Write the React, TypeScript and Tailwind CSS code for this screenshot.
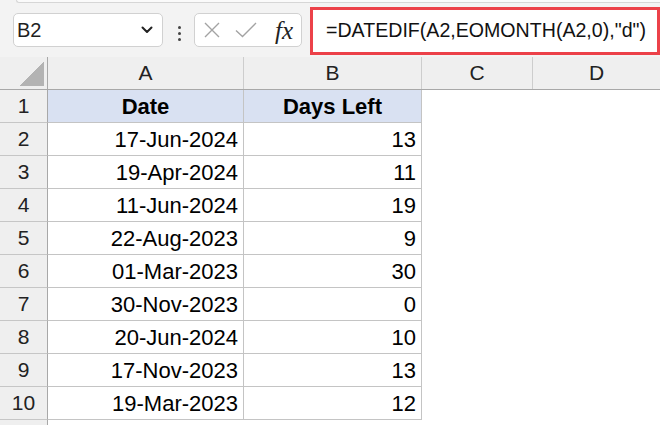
import React from 'react';

const ROWS = [
  { date: '17-Jun-2024', left: 13 },
  { date: '19-Apr-2024', left: 11 },
  { date: '11-Jun-2024', left: 19 },
  { date: '22-Aug-2023', left: 9 },
  { date: '01-Mar-2023', left: 30 },
  { date: '30-Nov-2023', left: 0 },
  { date: '20-Jun-2024', left: 10 },
  { date: '17-Nov-2023', left: 13 },
  { date: '19-Mar-2023', left: 12 },
];

const COLS = 'grid grid-cols-[48px_196px_178px_111px_1fr]';
const SANS = "font-['Liberation_Sans',Arial,sans-serif]";

function Toolbar() {
  return (
    <div className="h-[57px] bg-[#f3f3f3]">
      <div className="ml-[16px] h-[3px] rounded-bl-[4px] border-b border-l border-[#d6d6d6] bg-[#fafafa]" />
      <div className="flex items-start">
        <div className="ml-[13px] mt-[10px] flex h-[34px] w-[150px] items-center justify-between rounded-[5px] border border-[#d1d1d1] bg-white pl-[3px] pr-[9px]">
          <span className="text-[20px] text-[#1f1f1f]">B2</span>
          <svg width="12" height="8" viewBox="0 0 12 8" fill="none">
            <path d="M1.5 1.5 6 6l4.5-4.5" stroke="#222" strokeWidth="2" strokeLinecap="round" strokeLinejoin="round" />
          </svg>
        </div>
        <div className="ml-[14px] mt-[23px] flex w-[4px] flex-col items-center gap-[3px]">
          <span className="h-[3px] w-[3px] rounded-full bg-[#444]" />
          <span className="h-[3px] w-[3px] rounded-full bg-[#444]" />
          <span className="h-[3px] w-[3px] rounded-full bg-[#444]" />
        </div>
        <div className="ml-[13px] mt-[10px] flex h-[34px] w-[108px] items-center rounded-[5px] border border-[#d1d1d1] bg-white pl-[9px]">
          <svg width="16" height="16" viewBox="0 0 16 16" fill="none">
            <path d="M1 1l14 14M15 1 1 15" stroke="#a3a3a3" strokeWidth="1.4" />
          </svg>
          <svg className="ml-[15px]" width="22" height="16" viewBox="0 0 22 16" fill="none">
            <path d="M1 8.5 7.5 14.5 21 1" stroke="#a3a3a3" strokeWidth="1.4" />
          </svg>
          <span className="ml-[18px] font-['Liberation_Serif',serif] text-[25px] italic leading-none text-[#222]">
            fx
          </span>
        </div>
        <div className="ml-[8px] mt-[4px] flex h-[48px] flex-1 items-center border-[3px] border-[#ec4149] bg-white pl-[13px]">
          <span className="text-[19.6px] text-[#111]">=DATEDIF(A2,EOMONTH(A2,0),"d")</span>
        </div>
      </div>
    </div>
  );
}

function ColumnHeaders() {
  return (
    <div className={`${COLS} h-[33px] border-b border-[#a8a8a8] bg-[#efefef] text-[21px] text-[#222]`}>
      <div className="flex items-end justify-end border-r border-[#a8a8a8] pb-[3px] pr-[3px]">
        <div className="h-[24px] w-[25px] bg-[linear-gradient(to_bottom_right,transparent_50%,#b3b3b3_50%)]" />
      </div>
      {['A', 'B', 'C', 'D'].map((c) => (
        <div key={c} className="flex items-center justify-center border-r border-[#cdcdcd] last:border-r-0">
          {c}
        </div>
      ))}
    </div>
  );
}

function RowHead({ n }: { n: number }) {
  return (
    <div className="flex items-center justify-center border-b border-r border-b-[#c6c6c6] border-r-[#a8a8a8] bg-[#efefef] text-[21px] text-[#222]">
      {n}
    </div>
  );
}

export default function App() {
  return (
    <div className={`h-[425px] w-[660px] overflow-hidden bg-white ${SANS}`}>
      <Toolbar />
      <ColumnHeaders />
      <div className={`${COLS} auto-rows-[33px] text-[22px] text-black`}>
        <RowHead n={1} />
        <div className="flex items-center justify-center border-b border-r border-[#c4c4c4] bg-[#d9e1f2] font-bold">
          Date
        </div>
        <div className="flex items-center justify-center border-b border-r border-[#c4c4c4] bg-[#d9e1f2] font-bold">
          Days Left
        </div>
        <div />
        <div />
        {ROWS.map((r, i) => (
          <React.Fragment key={i}>
            <RowHead n={i + 2} />
            <div className="flex items-center justify-end border-b border-r border-[#c4c4c4] pr-[5px]">{r.date}</div>
            <div className="flex items-center justify-end border-b border-r border-[#c4c4c4] pr-[5px]">{r.left}</div>
            <div />
            <div />
          </React.Fragment>
        ))}
        <div className="border-r border-[#a8a8a8] bg-[#efefef]" />
      </div>
    </div>
  );
}
